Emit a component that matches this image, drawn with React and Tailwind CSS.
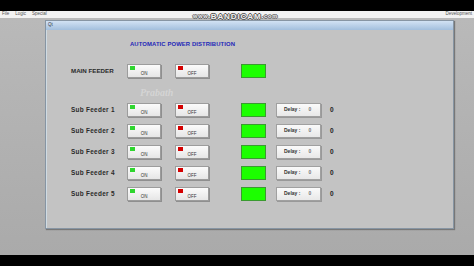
import React from 'react'

const font = { fontFamily: '"Liberation Sans", Arial, sans-serif' }

const SwitchButton = ({ label, on }) => {
    return (
        <div className="w-[34px] h-[14px] flex flex-col border border-[#9c9c9c] bg-gradient-to-b from-[#fbfbfb] to-[#e6e6e6] shadow-[1px_1px_0_#8f8f8f]">
            <div className={`ml-[2px] mt-[1px] w-[5px] h-[4px] ${on ? "bg-[#2fd62f]" : "bg-[#d40000]"}`}></div>
            <div className="flex-1 flex items-center justify-center text-[4.5px] leading-none text-[#333] pt-[1px]">{label}</div>
        </div>
    )
}

const FeederRow = ({ name, delay, caps }) => {
    return (
        <div className="flex items-center h-[14px]">
            <div className={`w-[56px] font-bold text-[#2a2a2a] whitespace-nowrap ${caps ? "text-[6.2px]" : "text-[6.4px] tracking-[0.3px]"}`}>{name}</div>
            <SwitchButton label="ON" on />
            <div className="ml-[14px]"><SwitchButton label="OFF" /></div>
            <div className="ml-[32px] w-[25px] h-[14px] bg-[#1cff00] border border-[#3a9a30]"></div>
            {delay ? (
                <>
                    <div className="ml-[10px] w-[45px] h-[14px] flex items-center border border-[#a0a0a0] bg-gradient-to-b from-[#fafafa] to-[#e8e8e8] shadow-[1px_1px_0_#999]">
                        <span className="ml-[7px] text-[5px] font-bold text-[#333]">Delay :</span>
                        <span className="ml-[8px] text-[5px] font-bold text-[#777]">0</span>
                    </div>
                    <div className="ml-[9px] text-[6.5px] font-bold text-[#222]">0</div>
                </>
            ) : null}
        </div>
    )
}

const App = () => {
    const subs = [1, 2, 3, 4, 5]

    return (
        <div className="w-[474px] h-[266px] bg-black flex flex-col overflow-hidden relative" style={font}>
            <div className="h-[11px]"></div>
            <div className="h-[7px] bg-[#f2f2f2] flex items-center justify-between px-[2px] text-[4.5px] text-[#555]">
                <div className="flex gap-[6px]">
                    <span>File</span>
                    <span>Logic</span>
                    <span>Special</span>
                </div>
                <span>Development</span>
            </div>
            <div className="h-[237px] bg-gradient-to-b from-[#b9b9b9] to-[#aaaaaa] pt-[2px] pl-[45px]">
                <div className="w-[409px] h-[209px] flex flex-col border border-[#8795a3] shadow-[1px_1px_1px_#777]">
                    <div className="h-[9px] bg-gradient-to-b from-[#d2e2f3] to-[#a3bfdd] flex items-center px-[2px]">
                        <span className="text-[4.5px] text-[#334]">Qt</span>
                    </div>
                    <div className="flex-1 bg-[#c3c3c3] border-l border-[#cfdbe3] flex flex-col pl-[24px]">
                        <div className="mt-[10px] h-[8px] flex items-center pl-[59px] text-[5.9px] font-bold text-[#2226b8] tracking-[0.1px]">AUTOMATIC POWER DISTRIBUTION</div>
                        <div className="mt-[16px]">
                            <FeederRow name="MAIN FEEDER" caps />
                        </div>
                        <div className="mt-[25px] flex flex-col gap-[7px]">
                            {subs.map((n) => (
                                <FeederRow key={n} name={`Sub Feeder ${n}`} delay />
                            ))}
                        </div>
                    </div>
                </div>
            </div>
            <div className="h-[11px]"></div>

            {/* recording watermarks over the screen */}
            <div className="absolute left-[193px] top-[12px] h-[9px] flex items-center text-[8px] leading-none font-bold text-[#f0f0f0] tracking-[0.9px] [text-shadow:1px_0_0_#555,-1px_0_0_#555,0_1px_0_#555,0_-1px_0_#555]">
                <span className="text-[5.5px]">www.</span>BANDICAM<span className="text-[5.5px]">.com</span>
            </div>
            <div className="absolute left-[140px] top-[85px] text-[10px] font-bold italic text-white/30" style={{ fontFamily: '"Liberation Serif", serif' }}>Prabath</div>
        </div>
    )
}

export default App
